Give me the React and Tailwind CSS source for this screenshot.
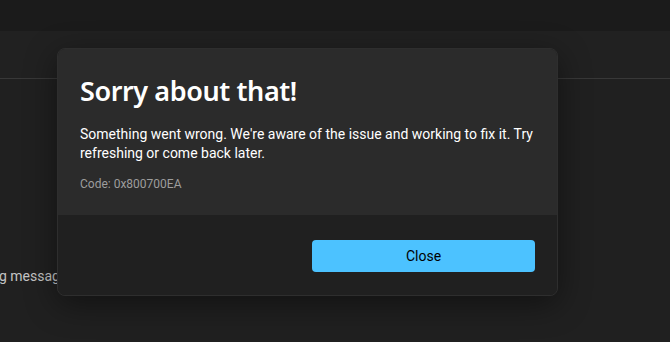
export default function App() {
  return (
    <div
      className="relative w-[670px] h-[342px] overflow-hidden bg-[#202020] text-white"
      style={{ fontFamily: 'Roboto, "Noto Sans", sans-serif' }}
    >
      {/* app chrome behind the dialog */}
      <div className="h-[31px] bg-[#1b1b1b]" />
      <div className="h-[47px] bg-[#212121]" />
      <div className="h-px bg-[#383838]" />
      <div className="pt-[187px] text-sm leading-5 text-[#c4c4c4] -ml-[1px]">g message</div>

      {/* dialog */}
      <div className="absolute left-[57px] top-[48px] w-[501px] rounded-lg overflow-hidden shadow-[0_8px_32px_rgba(0,0,0,0.45)] border border-[#2e2e2e]">
        <div className="bg-[#2b2b2b] px-[22px] pt-[24px] pb-[23px]">
          <h1
            className="text-[27px] leading-9 font-semibold tracking-[-0.4px]"
            style={{ fontFamily: '"Noto Sans", sans-serif' }}
          >
            Sorry about that!
          </h1>
          <p className="mt-4 text-sm leading-[19px] text-white">
            Something went wrong. We're aware of the issue and working to fix it. Try refreshing or come back later.
          </p>
          <p className="mt-[13px] text-xs leading-4 text-[#9d9d9d]">Code: 0x800700EA</p>
        </div>
        <div className="bg-[#202020] flex justify-end px-[22px] pt-[25px] pb-[23px]">
          <button className="w-[223px] h-8 rounded bg-[#4cc2ff] text-sm text-black">Close</button>
        </div>
      </div>
    </div>
  );
}
